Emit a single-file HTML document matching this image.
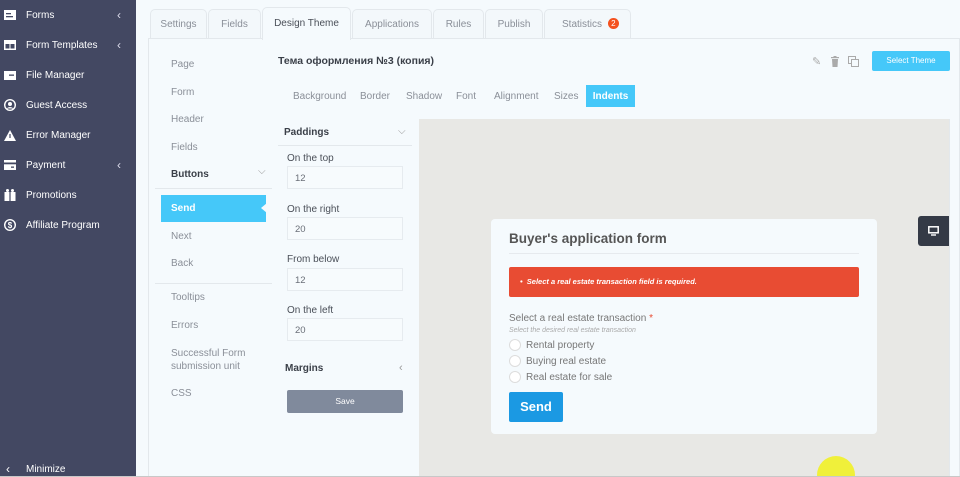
<!DOCTYPE html>
<html><head><meta charset="utf-8"><style>
*{box-sizing:border-box;margin:0;padding:0}
html,body{width:960px;height:477px;overflow:hidden}
body{background:#f5fafd;font-family:"Liberation Sans",sans-serif;position:relative;font-size:10px;color:#7a7f8a}
.abs{position:absolute}
#sb{left:0;top:0;width:136px;height:477px;background:#434862;color:#fff}
.si{position:absolute;left:0;width:136px;height:20px;font-size:10px;color:#fff;display:flex;align-items:center}
.si .ic{position:absolute;left:4px;width:12px;height:10px}
.si span{position:absolute;left:26px}
.si .ch{position:absolute;left:117px;font-size:12px;font-weight:normal;color:#dde}
.tab{position:absolute;top:9px;height:30px;border:1px solid #e3e8ec;border-bottom:none;border-radius:5px 5px 0 0;background:#f3f8fb;font-size:10px;color:#8a8f98;text-align:center;line-height:30px}
#panel{left:148px;top:38px;width:812px;height:439px;border:1px solid #e3e8ec;background:#f5fafd}
.ln{position:absolute;left:171px;font-size:10px;color:#8a8f98}
.lbl{position:absolute;left:287px;font-size:10px;color:#4a4f58}
.inp{position:absolute;left:287px;width:116px;height:23px;border:1px solid #e6ebef;background:#f7fbfd;font-size:9.5px;color:#6a6f78;padding:6px 0 0 7px}
.st{position:absolute;top:91px;font-size:10px;color:#8a8f98}
</style></head><body>
<div id="sb" class="abs">
 <div class="si" style="top:5px"><svg class="ic" viewBox="0 0 12 10"><rect x="0" y="0" width="12" height="10" fill="#fff"/><rect x="2" y="3" width="5" height="1.3" fill="#434862"/><rect x="2" y="6" width="7" height="1.3" fill="#434862"/></svg><span>Forms</span><b class="ch">‹</b></div>
 <div class="si" style="top:35px"><svg class="ic" viewBox="0 0 12 10"><rect x="0" y="0" width="12" height="10" fill="#fff"/><rect x="1.5" y="4" width="4" height="4.5" fill="#434862"/><rect x="6.5" y="4" width="4" height="4.5" fill="#434862"/></svg><span>Form Templates</span><b class="ch">‹</b></div>
 <div class="si" style="top:65px"><svg class="ic" viewBox="0 0 12 10"><rect x="0" y="1" width="12" height="9" fill="#fff"/><rect x="5" y="4.5" width="5" height="1.3" fill="#434862"/></svg><span>File Manager</span></div>
 <div class="si" style="top:95px"><svg class="ic" viewBox="0 0 12 12" style="height:12px"><circle cx="6" cy="6" r="5.3" fill="none" stroke="#fff" stroke-width="1.4"/><circle cx="6" cy="5" r="2" fill="#fff"/><path d="M2.5 9.5Q6 6.5 9.5 9.5" fill="#fff"/></svg><span>Guest Access</span></div>
 <div class="si" style="top:125px"><svg class="ic" viewBox="0 0 12 11" style="height:11px"><path d="M6 0L12 11H0Z" fill="#fff"/><rect x="5.4" y="4" width="1.2" height="4" fill="#434862"/></svg><span>Error Manager</span></div>
 <div class="si" style="top:155px"><svg class="ic" viewBox="0 0 12 10"><rect x="0" y="0" width="12" height="10" fill="#fff"/><rect x="0" y="2.5" width="12" height="1.8" fill="#434862"/><rect x="7" y="6.5" width="3" height="1.3" fill="#434862"/></svg><span>Payment</span><b class="ch">‹</b></div>
 <div class="si" style="top:185px"><svg class="ic" viewBox="0 0 12 12" style="height:12px"><rect x="0.5" y="3" width="11" height="9" fill="#fff"/><rect x="5.4" y="1" width="1.2" height="11" fill="#434862"/><circle cx="3.5" cy="1.5" r="1.5" fill="#fff"/><circle cx="8.5" cy="1.5" r="1.5" fill="#fff"/></svg><span>Promotions</span></div>
 <div class="si" style="top:215px"><svg class="ic" viewBox="0 0 12 12" style="height:12px"><circle cx="6" cy="6" r="5.3" fill="none" stroke="#fff" stroke-width="1.4"/><text x="6" y="9" font-size="8" font-weight="bold" text-anchor="middle" fill="#fff" font-family="Liberation Sans">$</text></svg><span>Affiliate Program</span></div>
 <div class="si" style="top:459px"><b style="position:absolute;left:6px;font-size:12px;font-weight:normal">‹</b><span>Minimize</span></div>
</div>

<div class="tab" style="left:150px;width:57px">Settings</div>
<div class="tab" style="left:208px;width:53px">Fields</div>
<div class="tab" style="left:352px;width:80px">Applications</div>
<div class="tab" style="left:433px;width:51px">Rules</div>
<div class="tab" style="left:485px;width:58px">Publish</div>
<div class="tab" style="left:544px;width:87px;text-align:left;padding-left:17px">Statistics <span style="display:inline-block;width:11px;height:11px;border-radius:50%;background:#f4511e;color:#fff;font-size:8px;line-height:11px;text-align:center;vertical-align:1px;margin-left:3px">2</span></div>
<div id="panel" class="abs"></div>
<div class="tab" style="left:262px;top:7px;width:89px;height:33px;background:#f5fafd;color:#4a4f58;line-height:32px;z-index:2">Design Theme</div>

<div class="ln" style="top:59px">Page</div>
<div class="ln" style="top:87px">Form</div>
<div class="ln" style="top:114px">Header</div>
<div class="ln" style="top:142px">Fields</div>
<div class="ln" style="top:169px;color:#3a3f48;font-weight:bold">Buttons</div>
<div class="abs" style="left:258px;top:166px;color:#999;font-size:10px">⌵</div>
<div class="abs" style="left:155px;top:188px;width:117px;height:1px;background:#e3e8ec"></div>
<div class="abs" style="left:161px;top:195px;width:105px;height:27px;background:#45c8f9"></div>
<div class="abs" style="left:261px;top:203px;width:0;height:0;border-top:5px solid transparent;border-bottom:5px solid transparent;border-right:6px solid #f5fafd"></div>
<div class="ln" style="top:203px;color:#fff;font-weight:bold">Send</div>
<div class="ln" style="top:231px">Next</div>
<div class="ln" style="top:258px">Back</div>
<div class="abs" style="left:155px;top:283px;width:117px;height:1px;background:#e3e8ec"></div>
<div class="ln" style="top:292px">Tooltips</div>
<div class="ln" style="top:320px">Errors</div>
<div class="ln" style="top:347px;line-height:13px">Successful Form<br>submission unit</div>
<div class="ln" style="top:388px">CSS</div>

<div class="abs" style="left:278px;top:55px;font-size:10.5px;font-weight:bold;color:#3a3f48;font-family:'Liberation Sans','DejaVu Sans',sans-serif">Тема оформления №3 (копия)</div>
<div class="abs" style="left:812px;top:55px;font-size:11px;color:#aaa">✎</div>
<svg class="abs" style="left:830px;top:56px" width="10" height="11" viewBox="0 0 10 11"><rect x="1" y="1" width="8" height="1.2" fill="#aaa"/><rect x="3.5" y="0" width="3" height="1.2" fill="#aaa"/><path d="M2 3h6l-.5 8h-5z" fill="#aaa"/></svg>
<svg class="abs" style="left:848px;top:56px" width="11" height="11" viewBox="0 0 11 11"><rect x="0.5" y="0.5" width="7" height="7" fill="none" stroke="#aaa"/><rect x="3.5" y="3.5" width="7" height="7" fill="#f5fafd" stroke="#aaa"/></svg>
<div class="abs" style="left:872px;top:51px;width:78px;height:20px;background:#45c8f9;border-radius:2px;color:#fff;font-size:8px;text-align:center;line-height:20px">Select Theme</div>

<div class="st" style="left:293px">Background</div>
<div class="st" style="left:360px">Border</div>
<div class="st" style="left:406px">Shadow</div>
<div class="st" style="left:456px">Font</div>
<div class="st" style="left:494px">Alignment</div>
<div class="st" style="left:554px">Sizes</div>
<div class="abs" style="left:586px;top:85px;width:49px;height:22px;background:#45c8f9;color:#fff;font-weight:bold;font-size:10px;text-align:center;line-height:22px;padding-top:1px">Indents</div>

<div class="abs" style="left:284px;top:127px;font-size:10px;font-weight:bold;color:#3a3f48">Paddings</div>
<div class="abs" style="left:398px;top:126px;color:#999;font-size:10px">⌵</div>
<div class="abs" style="left:278px;top:145px;width:134px;height:1px;background:#e3e8ec"></div>
<div class="lbl" style="top:153px">On the top</div><div class="inp" style="top:166px">12</div>
<div class="lbl" style="top:204px">On the right</div><div class="inp" style="top:217px">20</div>
<div class="lbl" style="top:254px">From below</div><div class="inp" style="top:268px">12</div>
<div class="lbl" style="top:305px">On the left</div><div class="inp" style="top:318px">20</div>
<div class="abs" style="left:285px;top:363px;font-size:10px;font-weight:bold;color:#3a3f48">Margins</div>
<div class="abs" style="left:399px;top:362px;color:#999;font-size:11px">‹</div>
<div class="abs" style="left:287px;top:390px;width:116px;height:23px;background:#808a9c;border-radius:2px;color:#fff;font-size:8.5px;text-align:center;line-height:23px">Save</div>

<div class="abs" style="left:419px;top:119px;width:530px;height:358px;background:#e8e8e5"></div>
<div class="abs" style="left:949px;top:119px;width:1px;height:358px;background:#e3e8ec"></div>
<div class="abs" style="left:491px;top:219px;width:386px;height:215px;background:#f5fafd;border-radius:4px"></div>
<div class="abs" style="left:509px;top:231px;font-size:13.5px;font-weight:bold;color:#555">Buyer's application form</div>
<div class="abs" style="left:509px;top:253px;width:350px;height:1px;background:#e6eaee"></div>
<div class="abs" style="left:509px;top:267px;width:350px;height:30px;background:#e84c33;border-radius:2px;color:#fff;font-size:7.5px;font-style:italic;font-weight:bold;line-height:30px;padding-left:11px">•&nbsp;&nbsp;Select a real estate transaction field is required.</div>
<div class="abs" style="left:509px;top:313px;font-size:10px;color:#777">Select a real estate transaction <span style="color:#e84c33">*</span></div>
<div class="abs" style="left:509px;top:327px;font-size:7px;font-style:italic;color:#aaa">Select the desired real estate transaction</div>
<div class="abs" style="left:509px;top:339px;width:12px;height:12px;border:1px solid #ddd;border-radius:50%;background:#fff"></div>
<div class="abs" style="left:526px;top:340px;font-size:10px;color:#777">Rental property</div>
<div class="abs" style="left:509px;top:355px;width:12px;height:12px;border:1px solid #ddd;border-radius:50%;background:#fff"></div>
<div class="abs" style="left:526px;top:356px;font-size:10px;color:#777">Buying real estate</div>
<div class="abs" style="left:509px;top:371px;width:12px;height:12px;border:1px solid #ddd;border-radius:50%;background:#fff"></div>
<div class="abs" style="left:526px;top:372px;font-size:10px;color:#777">Real estate for sale</div>
<div class="abs" style="left:509px;top:392px;width:54px;height:30px;background:#1b99e3;border-radius:2px;color:#fff;font-size:13px;font-weight:bold;text-align:center;line-height:30px">Send</div>

<div class="abs" style="left:918px;top:216px;width:31px;height:30px;background:#343a46;border-radius:3px 0 0 3px"></div>
<svg class="abs" style="left:928px;top:226px" width="11" height="10" viewBox="0 0 11 10"><rect x="0.8" y="0.8" width="9.4" height="6" fill="none" stroke="#fff" stroke-width="1.5"/><rect x="3" y="8.3" width="5" height="1.4" fill="#fff"/></svg>
<div class="abs" style="left:817px;top:456px;width:38px;height:38px;border-radius:50%;background:#f0f03a"></div>
<div class="abs" style="left:0;top:476px;width:960px;height:1px;background:#c8c8c8"></div>
</body></html>
